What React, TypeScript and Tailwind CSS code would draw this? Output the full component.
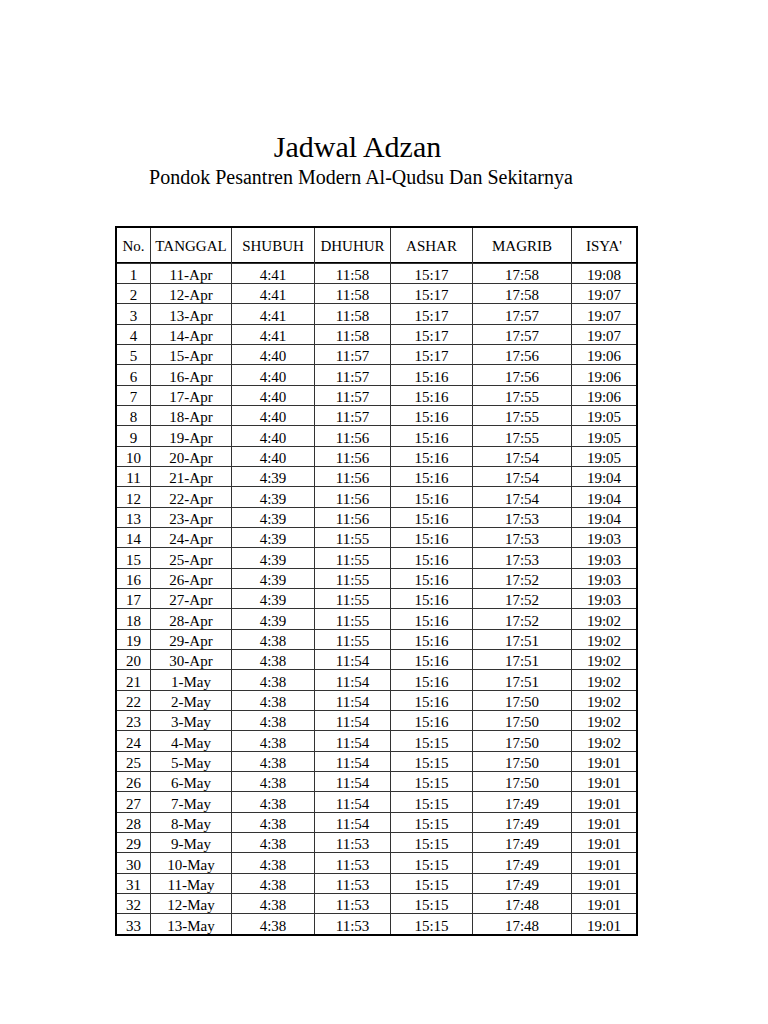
const HEADERS = ["No.", "TANGGAL", "SHUBUH", "DHUHUR", "ASHAR", "MAGRIB", "ISYA'"];

// tanggal, shubuh, dhuhur, ashar, magrib, isya
const SCHEDULE = `11-Apr 4:41 11:58 15:17 17:58 19:08
12-Apr 4:41 11:58 15:17 17:58 19:07
13-Apr 4:41 11:58 15:17 17:57 19:07
14-Apr 4:41 11:58 15:17 17:57 19:07
15-Apr 4:40 11:57 15:17 17:56 19:06
16-Apr 4:40 11:57 15:16 17:56 19:06
17-Apr 4:40 11:57 15:16 17:55 19:06
18-Apr 4:40 11:57 15:16 17:55 19:05
19-Apr 4:40 11:56 15:16 17:55 19:05
20-Apr 4:40 11:56 15:16 17:54 19:05
21-Apr 4:39 11:56 15:16 17:54 19:04
22-Apr 4:39 11:56 15:16 17:54 19:04
23-Apr 4:39 11:56 15:16 17:53 19:04
24-Apr 4:39 11:55 15:16 17:53 19:03
25-Apr 4:39 11:55 15:16 17:53 19:03
26-Apr 4:39 11:55 15:16 17:52 19:03
27-Apr 4:39 11:55 15:16 17:52 19:03
28-Apr 4:39 11:55 15:16 17:52 19:02
29-Apr 4:38 11:55 15:16 17:51 19:02
30-Apr 4:38 11:54 15:16 17:51 19:02
1-May 4:38 11:54 15:16 17:51 19:02
2-May 4:38 11:54 15:16 17:50 19:02
3-May 4:38 11:54 15:16 17:50 19:02
4-May 4:38 11:54 15:15 17:50 19:02
5-May 4:38 11:54 15:15 17:50 19:01
6-May 4:38 11:54 15:15 17:50 19:01
7-May 4:38 11:54 15:15 17:49 19:01
8-May 4:38 11:54 15:15 17:49 19:01
9-May 4:38 11:53 15:15 17:49 19:01
10-May 4:38 11:53 15:15 17:49 19:01
11-May 4:38 11:53 15:15 17:49 19:01
12-May 4:38 11:53 15:15 17:48 19:01
13-May 4:38 11:53 15:15 17:48 19:01`
  .split("\n")
  .map((line) => line.split(" "));

export default function App() {
  return (
    <div className="min-h-[1024px] bg-white pl-[115px] pt-[130px] text-black font-['Liberation_Serif',serif]">
      <h1 className="w-[485px] text-center text-[30px] leading-[34px] font-normal">Jadwal Adzan</h1>
      <p className="mt-px w-[492px] text-center text-[20px] leading-[24px]">
        Pondok Pesantren Modern Al-Qudsu Dan Sekitarnya
      </p>

      <div className="mt-[37px] grid w-[523px] grid-cols-[33px_80px_82px_75px_81px_98px_64px] gap-px border-2 border-black bg-[#333] text-[15px] leading-none">
        {HEADERS.map((h) => (
          <div key={h} className="flex h-[35px] items-center justify-center border-b border-black bg-white pt-[2px]">
            {h}
          </div>
        ))}
        {SCHEDULE.map((row, i) => {
          const cells = [String(i + 1), ...row];
          return cells.map((c, j) => (
            <div
              key={`${i}-${j}`}
              className={`flex items-center justify-center bg-white pt-[4px] ${i % 3 === 2 ? "h-[20px]" : "h-[19px]"}`}
            >
              {c}
            </div>
          ));
        })}
      </div>
    </div>
  );
}
